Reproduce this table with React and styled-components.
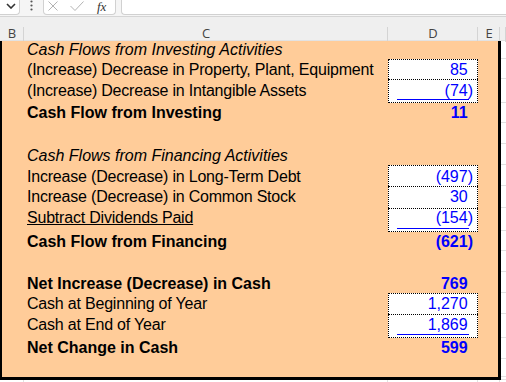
import React from 'react';
import styled, { createGlobalStyle, css } from 'styled-components';

const Global = createGlobalStyle`
  html, body { margin: 0; padding: 0; background: #fff; }
`;

const rows = [
  { h: 18, label: 'Cash Flows from Investing Activities', kind: 'italic' },
  { h: 20, label: '(Increase) Decrease in Property, Plant, Equipment', value: '85', input: true },
  { h: 24, pb: 3, label: '(Increase) Decrease in Intangible Assets', value: '(74)', input: true, last: true },
  { h: 20, pb: 1, label: 'Cash Flow from Investing', kind: 'bold', value: '11' },
  { h: 21 },
  { h: 21, label: 'Cash Flows from Financing Activities', kind: 'italic' },
  { h: 21, pb: 0.5, label: 'Increase (Decrease) in Long-Term Debt', value: '(497)', input: true },
  { h: 22, pb: 2, label: 'Increase (Decrease) in Common Stock', value: '30', input: true },
  { h: 23, pb: 4.5, label: 'Subtract Dividends Paid', underline: true, value: '(154)', input: true, last: true },
  { h: 20, label: 'Cash Flow from Financing', kind: 'bold', value: '(621)' },
  { h: 21 },
  { h: 21, pb: 0.5, label: 'Net Increase (Decrease) in Cash', kind: 'bold', value: '769' },
  { h: 21, pb: 1, label: 'Cash at Beginning of Year', value: '1,270', input: true },
  { h: 24, pb: 4, label: 'Cash at End of Year', value: '1,869', input: true, last: true },
  { h: 21, pb: 2, label: 'Net Change in Cash', kind: 'bold', value: '599' },
  { h: 18 },
];

const Page = styled.div`
  width: 506px;
  height: 382px;
  overflow: hidden;
  background: #fff;
  font-family: "Liberation Sans", Arial, sans-serif;
`;

const Toolbar = styled.div`
  height: 16px;
  display: flex;
  align-items: flex-start;
  background: #f5f5f5;
`;

const NameBox = styled.div`
  width: 20px;
  height: 15px;
  background: #fff;
  border: 1px solid #d1d1d1;
  border-width: 0 1px 1px 0;
  border-bottom-right-radius: 4px;
  display: flex;
  align-items: center;
  justify-content: center;
  padding: 0 0 3px 2px;
  box-sizing: border-box;
`;

const Grip = styled.div`
  width: 23px;
  display: flex;
  justify-content: center;
`;

const FormulaTools = styled.div`
  width: 73px;
  height: 15px;
  box-sizing: border-box;
  background: #fff;
  border: 1px solid #d1d1d1;
  border-top: none;
  border-radius: 0 0 4px 4px;
  display: flex;
  align-items: center;
  padding: 0 0 2px 4px;
  gap: 12px;
  svg { margin-bottom: 1px; }
`;

const Fx = styled.span`
  font-family: "Liberation Serif", "DejaVu Serif", serif;
  font-style: italic;
  font-size: 13px;
  line-height: 13px;
  color: #333;
  margin-left: 1px;
`;

const FormulaInput = styled.div`
  flex: 1;
  margin-left: 5px;
  height: 15px;
  box-sizing: border-box;
  background: #fff;
  border: 1px solid #d1d1d1;
  border-top: none;
  border-right: none;
  border-bottom-left-radius: 4px;
`;

const Header = styled.div`
  display: grid;
  grid-template-columns: 24px 364px 90px 22px 1fr;
  height: 25px;
  box-sizing: border-box;
  background: #efefef;
  border-top: 1px solid #d5d5d5;
  border-bottom: 1px solid #e2e2e2;
`;

const ColHead = styled.div`
  display: flex;
  justify-content: center;
  align-items: center;
  padding-top: 7px;
  font-family: "Open Sans", "Noto Sans", sans-serif;
  font-size: 13px;
  color: #444;
  background: linear-gradient(#d4d4d4, #d4d4d4) right bottom / 1px 15px no-repeat;
`;

const Sheet = styled.div`
  display: flex;
`;

const Block = styled.div`
  width: 501px;
  box-sizing: border-box;
  background: #ffcc99;
  border: 3px solid #000;
  border-left-width: 2px;
  border-top: none;
`;

const Row = styled.div`
  display: grid;
  grid-template-columns: 21px 365px 90px 20px;
  height: ${(p) => p.$h}px;
`;

const Label = styled.div`
  grid-column: 2;
  display: flex;
  align-items: flex-end;
  padding: 0 0 ${(p) => p.$pb || 0}px 4px;
  font-size: 16px;
  line-height: 18px;
  color: #000;
  white-space: nowrap;
  letter-spacing: -0.2px;
  ${(p) => p.$kind === 'bold' && css`
    font-weight: bold;
    letter-spacing: 0;
  `}
  ${(p) => p.$kind === 'italic' && css`
    font-style: italic;
    letter-spacing: 0;
  `}
  span {
    text-decoration: ${(p) => (p.$underline ? 'underline' : 'none')};
  }
`;

const Amount = styled.div`
  grid-column: 3;
  position: relative;
  box-sizing: border-box;
  display: flex;
  align-items: flex-end;
  justify-content: flex-end;
  padding: 0 5px ${(p) => p.$pb || 0}px 0;
  font-size: 16px;
  line-height: 18px;
  color: #0000ff;
  font-weight: ${(p) => (p.$bold ? 'bold' : 'normal')};
  ${(p) => p.$input && css`
    background: #fff;
    border: 1px dotted #000;
    border-bottom: ${p.$last ? '1px dotted #000' : 'none'};
    padding-right: 4px;
    padding-bottom: ${Math.max(0, (p.$pb || 0) - (p.$last ? 1 : 0))}px;
  `}
  ${(p) => p.$last && css`
    &::after {
      content: '';
      position: absolute;
      left: 8px;
      right: 8px;
      bottom: 2px;
      height: 1px;
      background: #0000ff;
    }
  `}
`;

const Hidden = styled.span`
  visibility: hidden;
`;

const Strip = styled.div`
  flex: 1;
  display: flex;
  flex-direction: column;
`;

const StripCell = styled.div`
  height: ${(p) => p.$h}px;
  box-sizing: border-box;
  border-bottom: 1px solid #e1e1e1;
`;

const Tail = styled.div`
  display: grid;
  grid-template-columns: 24px 364px 90px 22px 1fr;
  height: 2px;
  div { border-right: 1px solid #e1e1e1; }
`;

function Chevron() {
  return (
    <svg width="10" height="6" viewBox="0 0 10 6">
      <path d="M1 1 L5 5 L9 1" fill="none" stroke="#333" strokeWidth="1.6" />
    </svg>
  );
}

function VDots() {
  return (
    <svg width="3" height="11" viewBox="0 0 3 11">
      <circle cx="1.5" cy="1.5" r="1.1" fill="#555" />
      <circle cx="1.5" cy="5.5" r="1.1" fill="#555" />
      <circle cx="1.5" cy="9.5" r="1.1" fill="#555" />
    </svg>
  );
}

function Cross() {
  return (
    <svg width="10" height="10" viewBox="0 0 10 10">
      <path d="M0.5 0.5 L9.5 9.5 M9.5 0.5 L0.5 9.5" stroke="#b3b3b3" strokeWidth="1" />
    </svg>
  );
}

function Check() {
  return (
    <svg width="14" height="10" viewBox="0 0 14 10">
      <path d="M0.5 5 L5 9.5 L13.5 0.5" fill="none" stroke="#b3b3b3" strokeWidth="1" />
    </svg>
  );
}

function Value({ text }) {
  const neg = text.startsWith('(');
  return (
    <span>
      {text}
      {!neg && <Hidden>)</Hidden>}
    </span>
  );
}

export default function App() {
  return (
    <Page>
      <Global />
      <Toolbar>
        <NameBox><Chevron /></NameBox>
        <Grip><VDots /></Grip>
        <FormulaTools>
          <Cross />
          <Check />
          <Fx>fx</Fx>
        </FormulaTools>
        <FormulaInput />
      </Toolbar>
      <Header>
        <ColHead>B</ColHead>
        <ColHead>C</ColHead>
        <ColHead>D</ColHead>
        <ColHead>E</ColHead>
        <ColHead />
      </Header>
      <Sheet>
        <Block>
          {rows.map((r, i) => (
            <Row key={i} $h={r.h}>
              <Label $kind={r.kind} $pb={r.pb} $underline={r.underline}>
                {r.label && <span>{r.label}</span>}
              </Label>
              {r.value && (
                <Amount
                  $pb={r.pb}
                  $input={r.input}
                  $last={r.last}
                  $bold={r.kind === 'bold'}
                >
                  <Value text={r.value} />
                </Amount>
              )}
            </Row>
          ))}
        </Block>
        <Strip>
          {rows.map((r, i) => (
            <StripCell key={i} $h={r.h} />
          ))}
          <StripCell $h={3} />
        </Strip>
      </Sheet>
      <Tail>
        <div />
        <div />
        <div />
        <div />
      </Tail>
    </Page>
  );
}
